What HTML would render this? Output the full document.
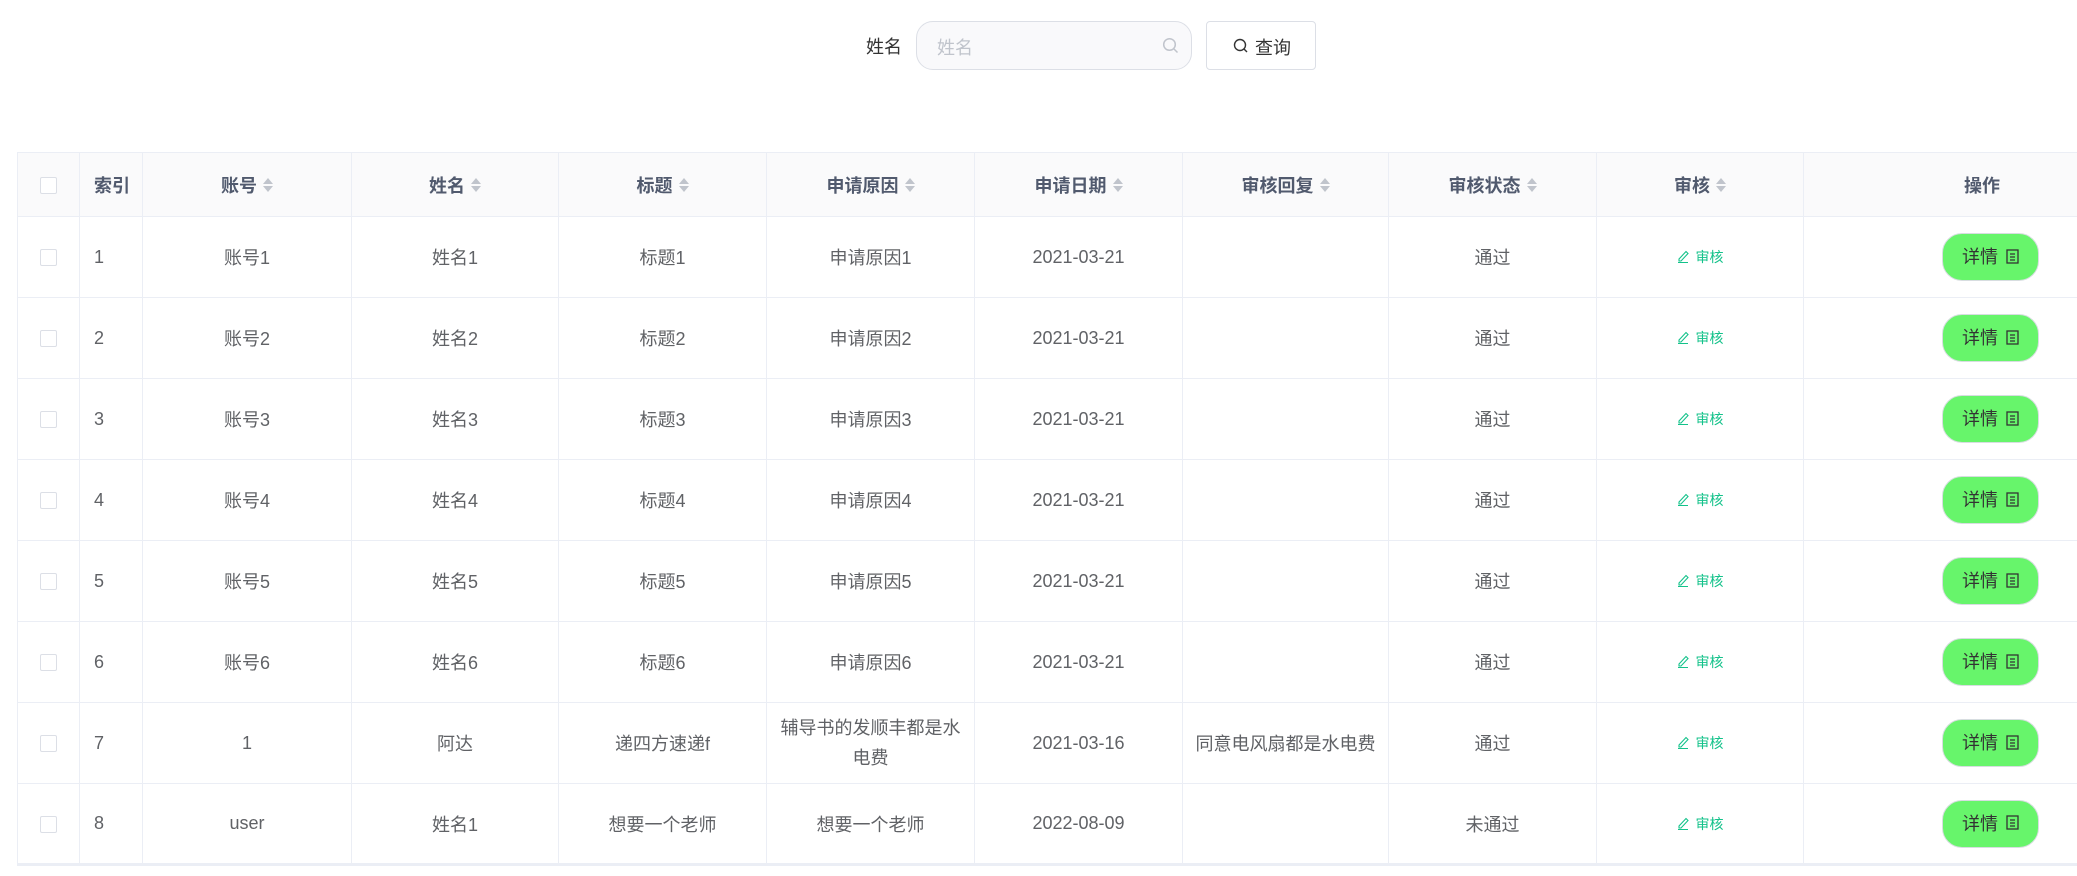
<!DOCTYPE html>
<html><head><meta charset="utf-8">
<style>
*{box-sizing:border-box;margin:0;padding:0}
body{width:2077px;height:876px;overflow:hidden;background:#fff;font-family:"Liberation Sans","Noto Sans CJK SC",sans-serif;color:#606266;position:relative}
.lbl{position:absolute;left:866px;top:33px;font-size:18px;color:#333}
.inp{position:absolute;left:916px;top:21px;width:276px;height:49px;border:1px solid #dcdfe6;border-radius:17px;background:#f9f9fb}
.inp span{position:absolute;left:20px;top:12px;font-size:18px;color:#c0c4cc}
.inp svg{position:absolute;right:12px;top:15px}
.btn{position:absolute;left:1206px;top:21px;width:110px;height:49px;border:1px solid #dcdfe6;border-radius:4px;background:#fff;font-size:18px;color:#333}
.btn svg{position:absolute;left:26px;top:16px}
.btn span{position:absolute;left:48px;top:12px}
.wrap{position:absolute;left:17px;top:152px;width:2060px;height:715px;overflow:hidden}
table{border-collapse:collapse;table-layout:fixed;width:2160px}
td,th{border:1px solid #ebeef5;text-align:center;font-size:18px;vertical-align:middle}
th{height:64px;background:#fafafb;color:#515a6e;font-weight:bold}
td{height:81px;color:#606266}
tr:last-child td{border-bottom:3px solid #ebeef5}
.l{text-align:left;padding-left:14px}
.cb{display:inline-block;width:17px;height:17px;border:1px solid #dcdfe6;border-radius:2px;background:#fff;vertical-align:middle}
.s{display:inline-block;width:10px;height:14px;vertical-align:middle;margin-left:6px;position:relative;top:-2px}
.s:before{content:"";position:absolute;left:0;top:0;border:5px solid transparent;border-bottom:6px solid #c0c4cc;border-top:0}
.s:after{content:"";position:absolute;left:0;top:8px;border:5px solid transparent;border-top:6px solid #c0c4cc;border-bottom:0}
.ed{color:#13c28a;font-size:14px}
.ed svg{vertical-align:middle;margin-right:6px;position:relative;top:-2px}
.dt{display:inline-block;width:97px;height:48px;border-radius:20px;background:#67f56b;border:1px solid #d7dde0;color:#333;font-size:18px;line-height:46px}
.dt svg{vertical-align:middle;margin-left:8px;position:relative;top:-2px}
</style></head><body>
<div class="lbl">姓名</div>
<div class="inp"><span>姓名</span><svg width="17" height="17" viewBox="0 0 17 17"><circle cx="7.5" cy="7.5" r="5.8" fill="none" stroke="#c0c4cc" stroke-width="1.5"/><path d="M12 12l3.5 3.5" stroke="#c0c4cc" stroke-width="1.5"/></svg></div>
<div class="btn"><svg width="16" height="16" viewBox="0 0 16 16"><circle cx="7" cy="7" r="5.5" fill="none" stroke="#333" stroke-width="1.4"/><path d="M11 11l3 3" stroke="#333" stroke-width="1.4"/></svg><span>查询</span></div>
<div class="wrap"><table>
<colgroup><col style="width:62px"><col style="width:63px"><col style="width:209px"><col style="width:207px"><col style="width:208px"><col style="width:208px"><col style="width:208px"><col style="width:206px"><col style="width:208px"><col style="width:207px"><col style="width:374px"></colgroup>
<tr><th><span class="cb"></span></th><th class="l">索引</th><th>账号<i class="s"></i></th><th>姓名<i class="s"></i></th><th>标题<i class="s"></i></th><th>申请原因<i class="s"></i></th><th>申请日期<i class="s"></i></th><th>审核回复<i class="s"></i></th><th>审核状态<i class="s"></i></th><th>审核<i class="s"></i></th><th style="padding-right:17px">操作</th></tr>
<tr><td><span class="cb"></span></td><td class="l">1</td><td>账号1</td><td>姓名1</td><td>标题1</td><td>申请原因1</td><td>2021-03-21</td><td></td><td>通过</td><td class="ed"><svg width="13" height="14" viewBox="0 0 13 14"><path d="M2 10L9 2.5l2 2L4 12H2z M1 13.5h10" fill="none" stroke="#13c28a" stroke-width="1.1"/></svg>审核</td><td><span class="dt">详情<svg width="13" height="15" viewBox="0 0 13 15"><rect x="1" y="1" width="11" height="13" fill="none" stroke="#333" stroke-width="1.3"/><path d="M4 5h5M4 8h5M4 11h5" stroke="#333" stroke-width="1.2"/></svg></span></td></tr>
<tr><td><span class="cb"></span></td><td class="l">2</td><td>账号2</td><td>姓名2</td><td>标题2</td><td>申请原因2</td><td>2021-03-21</td><td></td><td>通过</td><td class="ed"><svg width="13" height="14" viewBox="0 0 13 14"><path d="M2 10L9 2.5l2 2L4 12H2z M1 13.5h10" fill="none" stroke="#13c28a" stroke-width="1.1"/></svg>审核</td><td><span class="dt">详情<svg width="13" height="15" viewBox="0 0 13 15"><rect x="1" y="1" width="11" height="13" fill="none" stroke="#333" stroke-width="1.3"/><path d="M4 5h5M4 8h5M4 11h5" stroke="#333" stroke-width="1.2"/></svg></span></td></tr>
<tr><td><span class="cb"></span></td><td class="l">3</td><td>账号3</td><td>姓名3</td><td>标题3</td><td>申请原因3</td><td>2021-03-21</td><td></td><td>通过</td><td class="ed"><svg width="13" height="14" viewBox="0 0 13 14"><path d="M2 10L9 2.5l2 2L4 12H2z M1 13.5h10" fill="none" stroke="#13c28a" stroke-width="1.1"/></svg>审核</td><td><span class="dt">详情<svg width="13" height="15" viewBox="0 0 13 15"><rect x="1" y="1" width="11" height="13" fill="none" stroke="#333" stroke-width="1.3"/><path d="M4 5h5M4 8h5M4 11h5" stroke="#333" stroke-width="1.2"/></svg></span></td></tr>
<tr><td><span class="cb"></span></td><td class="l">4</td><td>账号4</td><td>姓名4</td><td>标题4</td><td>申请原因4</td><td>2021-03-21</td><td></td><td>通过</td><td class="ed"><svg width="13" height="14" viewBox="0 0 13 14"><path d="M2 10L9 2.5l2 2L4 12H2z M1 13.5h10" fill="none" stroke="#13c28a" stroke-width="1.1"/></svg>审核</td><td><span class="dt">详情<svg width="13" height="15" viewBox="0 0 13 15"><rect x="1" y="1" width="11" height="13" fill="none" stroke="#333" stroke-width="1.3"/><path d="M4 5h5M4 8h5M4 11h5" stroke="#333" stroke-width="1.2"/></svg></span></td></tr>
<tr><td><span class="cb"></span></td><td class="l">5</td><td>账号5</td><td>姓名5</td><td>标题5</td><td>申请原因5</td><td>2021-03-21</td><td></td><td>通过</td><td class="ed"><svg width="13" height="14" viewBox="0 0 13 14"><path d="M2 10L9 2.5l2 2L4 12H2z M1 13.5h10" fill="none" stroke="#13c28a" stroke-width="1.1"/></svg>审核</td><td><span class="dt">详情<svg width="13" height="15" viewBox="0 0 13 15"><rect x="1" y="1" width="11" height="13" fill="none" stroke="#333" stroke-width="1.3"/><path d="M4 5h5M4 8h5M4 11h5" stroke="#333" stroke-width="1.2"/></svg></span></td></tr>
<tr><td><span class="cb"></span></td><td class="l">6</td><td>账号6</td><td>姓名6</td><td>标题6</td><td>申请原因6</td><td>2021-03-21</td><td></td><td>通过</td><td class="ed"><svg width="13" height="14" viewBox="0 0 13 14"><path d="M2 10L9 2.5l2 2L4 12H2z M1 13.5h10" fill="none" stroke="#13c28a" stroke-width="1.1"/></svg>审核</td><td><span class="dt">详情<svg width="13" height="15" viewBox="0 0 13 15"><rect x="1" y="1" width="11" height="13" fill="none" stroke="#333" stroke-width="1.3"/><path d="M4 5h5M4 8h5M4 11h5" stroke="#333" stroke-width="1.2"/></svg></span></td></tr>
<tr><td><span class="cb"></span></td><td class="l">7</td><td>1</td><td>阿达</td><td>递四方速递f</td><td style="padding:0 12px;line-height:30px">辅导书的发顺丰都是水电费</td><td>2021-03-16</td><td>同意电风扇都是水电费</td><td>通过</td><td class="ed"><svg width="13" height="14" viewBox="0 0 13 14"><path d="M2 10L9 2.5l2 2L4 12H2z M1 13.5h10" fill="none" stroke="#13c28a" stroke-width="1.1"/></svg>审核</td><td><span class="dt">详情<svg width="13" height="15" viewBox="0 0 13 15"><rect x="1" y="1" width="11" height="13" fill="none" stroke="#333" stroke-width="1.3"/><path d="M4 5h5M4 8h5M4 11h5" stroke="#333" stroke-width="1.2"/></svg></span></td></tr>
<tr><td><span class="cb"></span></td><td class="l">8</td><td>user</td><td>姓名1</td><td>想要一个老师</td><td>想要一个老师</td><td>2022-08-09</td><td></td><td>未通过</td><td class="ed"><svg width="13" height="14" viewBox="0 0 13 14"><path d="M2 10L9 2.5l2 2L4 12H2z M1 13.5h10" fill="none" stroke="#13c28a" stroke-width="1.1"/></svg>审核</td><td><span class="dt">详情<svg width="13" height="15" viewBox="0 0 13 15"><rect x="1" y="1" width="11" height="13" fill="none" stroke="#333" stroke-width="1.3"/><path d="M4 5h5M4 8h5M4 11h5" stroke="#333" stroke-width="1.2"/></svg></span></td></tr>
</table></div>
</body></html>
